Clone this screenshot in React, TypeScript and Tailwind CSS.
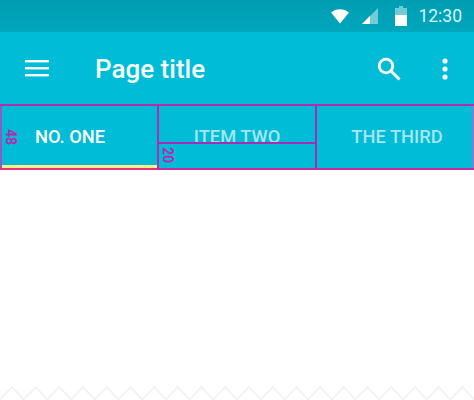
import React from "react";

function Tab({ label, active, className, children }: { label: string; active?: boolean; className: string; children?: React.ReactNode }) {
  return (
    <div className={`relative flex items-center justify-center ${className}`}>
      <span className={active ? "text-[18.3px] font-medium text-white" : "text-[18.3px] font-medium text-[#a6e6f0]"}>{label}</span>
      {children}
    </div>
  );
}

export default function App() {
  return (
    <div className="w-[474px] h-[400px] bg-white relative overflow-hidden" style={{ fontFamily: "Roboto, sans-serif" }}>
      <div className="h-[32px] bg-gradient-to-b from-[#009db1] to-[#00a6bc] flex items-center justify-end pr-[12px]">
        <svg width="20" height="16" viewBox="0 0 20 16" className="mr-[12px]">
          <path d="M1 4.5 C6 0 14 0 19 4.5 L10 15.5 Z" fill="#fff" />
        </svg>
        <svg width="18" height="18" viewBox="0 0 18 18" className="mr-[15px]">
          <path d="M16 1 V17 H0 Z" fill="#fff" fillOpacity="0.45" />
          <path d="M8 9 V17 H0 Z" fill="#fff" />
        </svg>
        <svg width="12" height="20" viewBox="0 0 12 20" className="mr-[11px]">
          <path d="M4 0 H8 V2 H12 V20 H0 V2 H4 Z" fill="#fff" fillOpacity="0.45" />
          <rect x="0" y="9" width="12" height="11" fill="#fff" />
        </svg>
        <span className="text-[17.5px] text-[#d8f2f6]">12:30</span>
      </div>

      <div className="h-[72px] bg-[#00bcd6] flex items-center pl-[25px] pr-[25px]">
        <svg width="24" height="18" viewBox="0 0 24 18">
          <rect x="0" y="1" width="24" height="2.4" fill="#fff" />
          <rect x="0" y="8" width="24" height="2.4" fill="#fff" />
          <rect x="0" y="15" width="24" height="2.4" fill="#fff" />
        </svg>
        <span className="ml-[46px] mt-[2px] text-[26px] font-medium text-[#f4fcfd] leading-none">Page title</span>
        <svg width="26" height="26" viewBox="0 0 26 26" className="ml-auto mr-[39px] mt-[2px]" fill="none" stroke="#fff">
          <circle cx="10" cy="10" r="6.8" strokeWidth="2.8" />
          <path d="M15 15 L23.5 23.5" strokeWidth="3" />
        </svg>
        <svg width="8" height="22" viewBox="0 0 8 22" fill="#fff" className="mt-[2px]">
          <circle cx="4" cy="3" r="2.6" />
          <circle cx="4" cy="11" r="2.6" />
          <circle cx="4" cy="19" r="2.6" />
        </svg>
      </div>

      <div className="relative h-[66px] bg-[#00bcd6] border-y-2 border-t-[#b52cae] border-b-[#c62ba6] flex">
        <Tab label="NO. ONE" active className="w-[159px] pr-[17px] border-r-2 border-[#b02cb0]">
          <span className="absolute left-[3px] top-[24px] text-[14px] font-bold text-[#b02cb0] leading-none rotate-90">48</span>
          <div className="absolute left-[2px] right-0 bottom-0 h-[3px] bg-[#ffee8c]" />
          <div className="absolute left-0 right-0 bottom-[-2px] h-[2px] bg-[#e9307c]" />
        </Tab>
        <Tab label="ITEM TWO" className="w-[158px] border-r-2 border-[#a62cb4]">
          <div className="absolute left-0 right-0 bottom-0 h-[26px] border-t-2 border-[#a62cb4]">
            <span className="absolute left-[1px] top-[4px] text-[14px] font-bold text-[#b02cb0] leading-none rotate-90">20</span>
          </div>
        </Tab>
        <Tab label="THE THIRD" className="flex-1 pl-[3px]" />
        <div className="absolute left-0 top-0 bottom-0 w-[2px] bg-[#8c5cc0]" />
        <div className="absolute right-0 top-0 bottom-0 w-[2px] bg-[#7d7fd0]" />
      </div>

      <svg width="474" height="14" viewBox="0 0 474 14" className="absolute left-0 bottom-0" fill="none" stroke="#f3f3f3" strokeWidth="2">
        <path d={Array.from({ length: 21 }, (_, i) => `${i === 0 ? "M" : "L"}${i * 23.7} 13.5 L${i * 23.7 + 12} 1`).join(" ")} />
      </svg>
    </div>
  );
}
